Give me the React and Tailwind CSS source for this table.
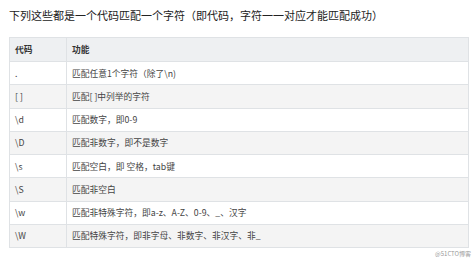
const rows = [
  ['.', '匹配任意1个字符（除了\\n)'],
  ['[ ]', '匹配[ ]中列举的字符'],
  ['\\d', '匹配数字，即0-9'],
  ['\\D', '匹配非数字，即不是数字'],
  ['\\s', '匹配空白，即 空格，tab键'],
  ['\\S', '匹配非空白'],
  ['\\w', '匹配非特殊字符，即a-z、A-Z、0-9、_、汉字'],
  ['\\W', '匹配特殊字符，即非字母、非数字、非汉字、非_'],
];

export default function App() {
  return (
    <div
      className="relative w-[474px] h-[260px] bg-white text-[#444]"
      style={{ fontFamily: '"Noto Sans CJK SC", "Liberation Sans", sans-serif' }}
    >
      {/* 标题 */}
      <div className="pl-[9px] pt-[7px] h-[37px] text-[11px] leading-[16px] text-[#222]">
        下列这些都是一个代码匹配一个字符（即代码，字符一一对应才能匹配成功）
      </div>

      {/* 表格 */}
      <table className="ml-[9px] w-[460px] border-collapse text-[8.75px]">
        <thead>
          <tr className="h-[24px] bg-[#eef0f2] text-[#333]">
            <th className="w-[57px] border border-[#dfe2e5] pl-[5px] text-left font-semibold">代码</th>
            <th className="border border-[#dfe2e5] pl-[5px] text-left font-semibold">功能</th>
          </tr>
        </thead>
        <tbody>
          {rows.map(([code, desc], i) => (
            <tr key={code} className={i % 2 === 1 ? 'h-[23.25px] bg-[#f4f4f4]' : 'h-[23.25px] bg-white'}>
              <td className="border border-[#dfe2e5] pl-[5px]">{code}</td>
              <td className="border border-[#dfe2e5] pl-[5px]">{desc}</td>
            </tr>
          ))}
        </tbody>
      </table>

      {/* 水印 */}
      <div className="absolute right-[3px] bottom-[2px] text-[6px] text-[#999]">@51CTO博客</div>
    </div>
  );
}
